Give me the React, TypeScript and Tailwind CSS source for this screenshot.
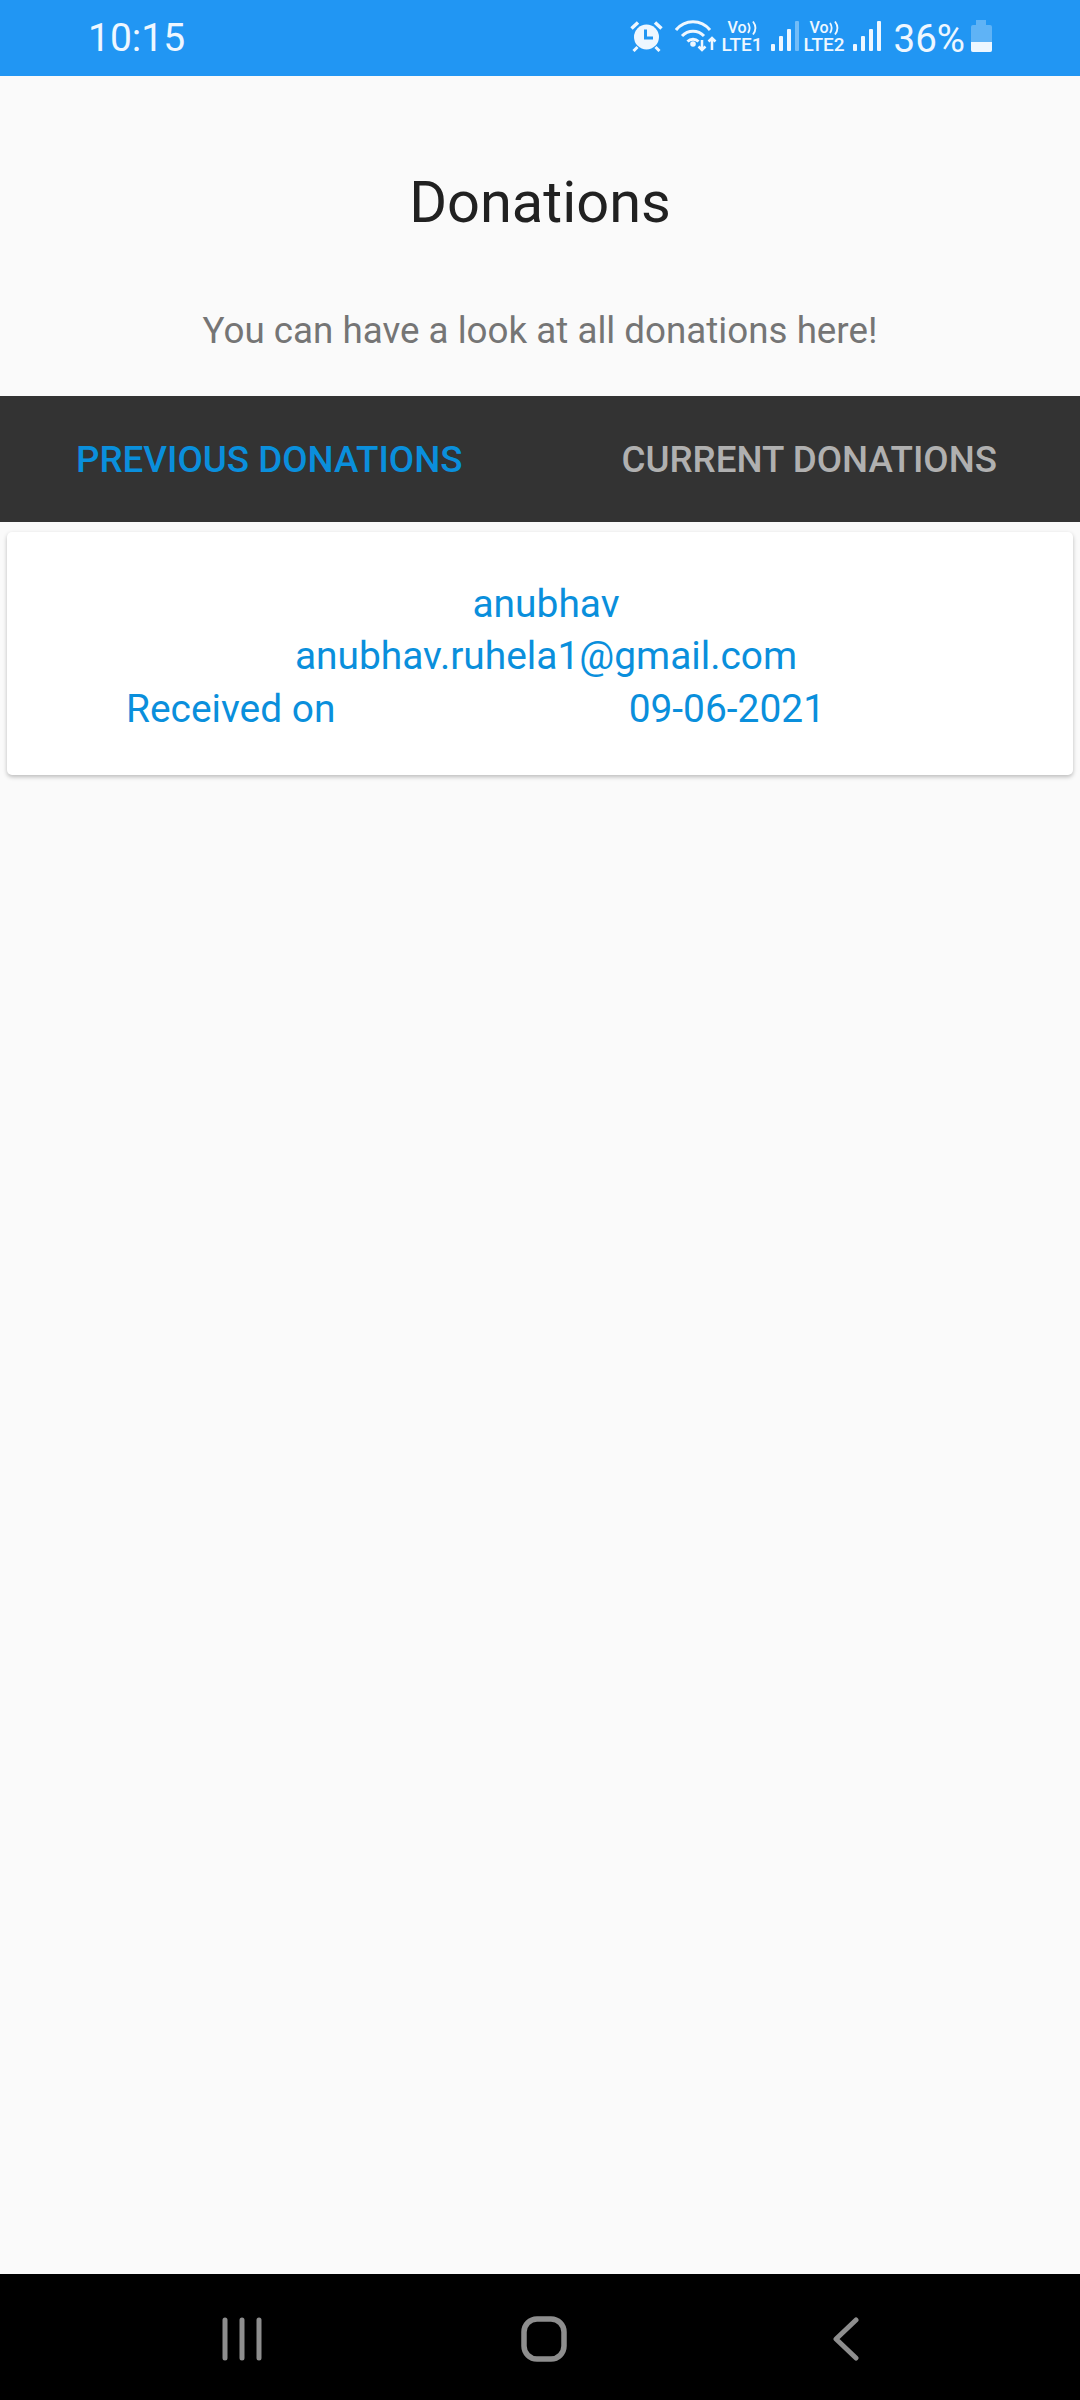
const roboto = "font-['Roboto',sans-serif]";

function Alarm() {
  return (
    <svg width="33" height="32" viewBox="0 0 33 32" fill="none">
      <circle cx="16.5" cy="17" r="12.5" fill="#eef7ff" />
      <path d="M15.5 9.5V18H23" stroke="#2196f3" strokeWidth="3" />
      <path d="M1.5 8.5L8 2.5M31.5 8.5L25 2.5" stroke="#eef7ff" strokeWidth="3.5" />
      <path d="M7.5 27L3.5 31M25.5 27l4 4" stroke="#eef7ff" strokeWidth="3" />
    </svg>
  );
}

function Wifi() {
  return (
    <svg width="42" height="32" viewBox="0 0 42 32" fill="none" stroke="#eef7ff">
      <path d="M1 10C10 -1 26 -1 35 10" strokeWidth="3" />
      <path d="M7 16c6-6.500 16-6.500 22 0" strokeWidth="3" />
      <path d="M12.500 21.500c3-3 8-3 11 0" strokeWidth="3" />
      <circle cx="18" cy="24" r="2.800" fill="#eef7ff" stroke="none" />
      <path d="M27 20v10M23.500 26.500L27 30l3.500-3.500" strokeWidth="2.500" />
      <path d="M37 30V18M33.500 21.500L37 18l3.500 3.500" strokeWidth="2.500" />
    </svg>
  );
}

function Signal({ dim }: { dim?: boolean }) {
  return (
    <svg width="28" height="32" viewBox="0 0 28 32" fill="#eef7ff">
      <rect x="0" y="24" width="4" height="7" rx="1" />
      <rect x="8" y="16" width="4" height="15" rx="1" />
      <rect x="16" y="9" width="4" height="22" rx="1" />
      <rect x="24" y="1" width="4" height="30" rx="1" opacity={dim ? 0.4 : 1} />
    </svg>
  );
}

function VoLte({ n }: { n: string }) {
  return (
    <div className="flex w-[41px] flex-col items-center text-[#eef7ff]">
      <div className="flex items-center">
        <span className="text-[16px] font-medium leading-[16px]">Vo</span>
        <svg width="10" height="14" viewBox="0 0 10 14" fill="none" stroke="#eef7ff" strokeWidth="1.800">
          <path d="M1 2c2 3 2 7 0 10M6 0.500c3 4 3 9 0 13" />
        </svg>
      </div>
      <span className="text-[19px] font-medium leading-[17px]">LTE{n}</span>
    </div>
  );
}

function Battery() {
  return (
    <svg width="21" height="32" viewBox="0 0 21 32">
      <path d="M5 0h10v5h4a2 2 0 0 1 2 2v23a2 2 0 0 1-2 2H2a2 2 0 0 1-2-2V7a2 2 0 0 1 2-2h3z" fill="#eef7ff" opacity="0.3" />
      <path d="M0 22h21v8a2 2 0 0 1-2 2H2a2 2 0 0 1-2-2z" fill="#eef7ff" />
    </svg>
  );
}

export default function App() {
  return (
    <div className={`flex h-[2400px] w-[1080px] flex-col bg-[#fafafa] ${roboto}`}>
      <div className="flex h-[76px] items-center bg-[#2196f3] pl-[88px] pr-[88px] text-[#eef7ff]">
        <span className="text-[39px] leading-none">10:15</span>
        <div className="ml-auto flex items-center pb-[4px]">
          <Alarm />
          <div className="ml-[12px]"><Wifi /></div>
          <div className="ml-[5px]"><VoLte n="1" /></div>
          <div className="ml-[8px]"><Signal dim /></div>
          <div className="ml-[5px]"><VoLte n="2" /></div>
          <div className="ml-[8px]"><Signal /></div>
          <span className="ml-[13px] mt-[6px] text-[38.500px] leading-none">36%</span>
          <div className="ml-[6px]"><Battery /></div>
        </div>
      </div>

      <div className="flex flex-col items-center">
        <h1 className="mt-[94px] text-[57.750px] leading-[64px] text-[#212121]">Donations</h1>
        <p className="mt-[76px] text-[36.750px] leading-[42px] text-[#757575]">You can have a look at all donations here!</p>
      </div>

      <div className="mt-[44px] flex h-[126px] items-center bg-[#333333] pt-[2px] text-[36.750px] font-medium">
        <span className="ml-[76px] text-[#0a8fdc]">PREVIOUS DONATIONS</span>
        <span className="ml-auto mr-[83px] text-[#b0b0b0]">CURRENT DONATIONS</span>
      </div>

      <div className="mx-[7px] mt-[10px] flex h-[243px] flex-col justify-center rounded-[5px] bg-white pt-[6px] text-[38.900px] leading-[52.500px] text-[#0a8fdc] shadow-[0_2px_4px_rgba(0,0,0,0.25)]">
        <div className="pl-[12px] text-center">anubhav</div>
        <div className="pl-[12px] text-center">anubhav.ruhela1@gmail.com</div>
        <div className="flex justify-between pl-[119px] pr-[248px]">
          <span>Received on</span>
          <span>09-06-2021</span>
        </div>
      </div>

      <div className="mt-auto flex h-[126px] items-center bg-black pl-[222px] pt-[4px]">
        <svg width="40" height="44" viewBox="0 0 40 44" stroke="#8e8e8e" strokeWidth="5" strokeLinecap="round">
          <path d="M3 3v38M20 3v38M37 3v38" />
        </svg>
        <svg className="ml-[259px]" width="46" height="46" viewBox="0 0 46 46" fill="none" stroke="#8e8e8e" strokeWidth="5.500">
          <rect x="3" y="3" width="40" height="40" rx="13" />
        </svg>
        <svg className="ml-[265px]" width="27" height="44" viewBox="0 0 27 44" fill="none" stroke="#8e8e8e" strokeWidth="5" strokeLinecap="round" strokeLinejoin="round">
          <path d="M24 3L4 22l20 19" />
        </svg>
      </div>
    </div>
  );
}
